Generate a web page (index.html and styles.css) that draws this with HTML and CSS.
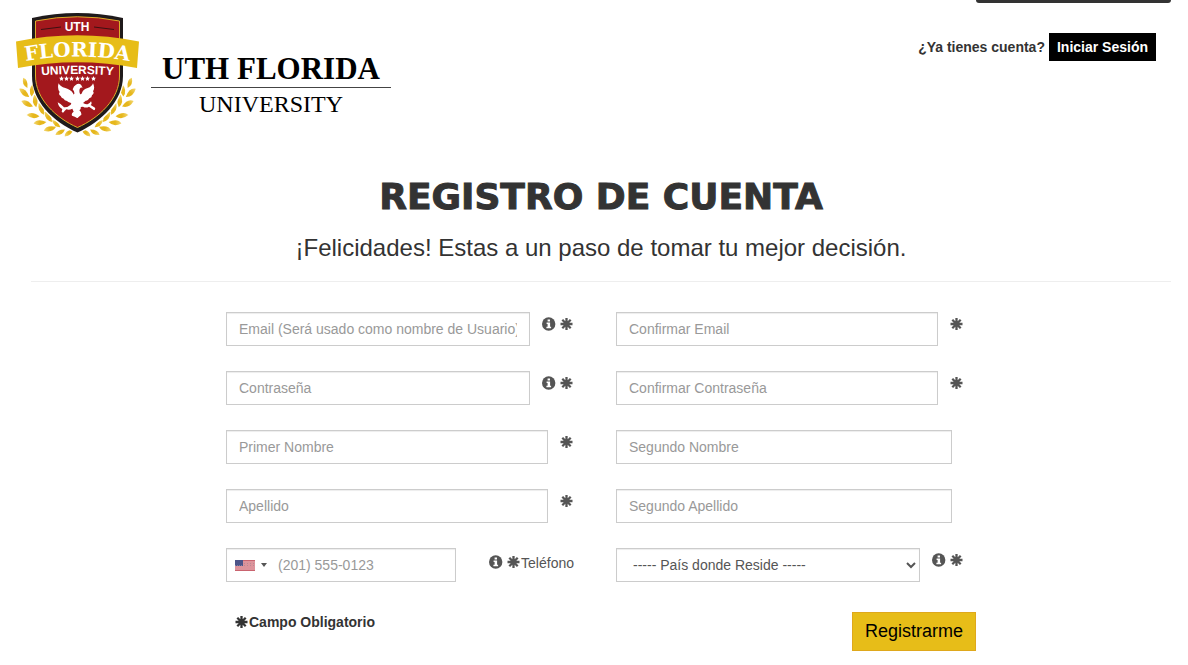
FILE: index.html
```html
<!DOCTYPE html>
<html lang="es">
<head>
<meta charset="utf-8">
<meta name="viewport" content="width=device-width, initial-scale=1">
<title>Registro de cuenta</title>
<link rel="stylesheet" href="styles.css">
</head>
<body>
<svg class="sprite" aria-hidden="true">
  <symbol id="asterisk" viewBox="0 0 14 14">
    <g stroke="currentColor" stroke-width="2.3">
      <path d="M6.500 1v12M.5 7h12M2.300 2.800l8.400 8.400M10.700 2.800l-8.400 8.400"/>
    </g>
  </symbol>
  <symbol id="info" viewBox="0 0 14 14">
    <circle cx="6.700" cy="7" r="6.700" fill="currentColor"/>
    <path fill="#fff" d="M5.600 2.400h2.400v2H5.600zM4.600 5.500h3.500v4.200h1V11.200H4.400V9.700h1.200V7h-1z"/>
  </symbol>
  <symbol id="leaf" viewBox="-6 -4 12 8" overflow="visible">
    <path d="M-5.500 0Q-2-4.500 5.500-.5Q1 4-5.500 0z" fill="url(#gold)"/>
  </symbol>
  <symbol id="star" viewBox="0 0 10 10">
    <path fill="#fff" d="M5 0l1.500 3.300 3.500.4-2.600 2.400.7 3.600L5 8 1.900 9.700l.7-3.600L0 3.700l3.500-.4z"/>
  </symbol>
</svg>

<div class="page">
  <div class="tab-strip"><span class="tab"></span></div>
  <header class="header">
    <a class="brand" href="#" aria-label="UTH Florida University">
      <svg class="emblem" viewBox="15 12 126 126" aria-hidden="true">
        <defs>
          <linearGradient id="gold"><stop offset="0" stop-color="#f3d873"/><stop offset=".5" stop-color="#e6b71d"/><stop offset="1" stop-color="#e6b71d"/></linearGradient>
          <path id="arc-name" d="M18 62.500Q77 50.500 137 62.500"/>
          <path id="arc-univ" d="M34 76Q77 72 121 76"/>
          <g id="laurel">
            <g transform="translate(25 83) rotate(70)"><use href="#leaf" x="-6" y="-4" width="12" height="8"/></g>
            <g transform="translate(24 93) rotate(42)"><use href="#leaf" x="-7" y="-5" width="14" height="10"/></g>
            <g transform="translate(27 104) rotate(28)"><use href="#leaf" x="-7" y="-5" width="14" height="10"/></g>
            <g transform="translate(33 116) rotate(8)"><use href="#leaf" x="-7" y="-5" width="14" height="10"/></g>
            <g transform="translate(40 123) rotate(-4)"><use href="#leaf" x="-7" y="-5" width="14" height="10"/></g>
            <g transform="translate(50 129) rotate(-15)"><use href="#leaf" x="-7" y="-5" width="14" height="10"/></g>
            <g transform="translate(60 132) rotate(-28)"><use href="#leaf" x="-6" y="-4" width="12" height="9"/></g>
            <g transform="translate(69 133) rotate(-38)"><use href="#leaf" x="-6" y="-4" width="12" height="8"/></g>
            <g transform="translate(32 90) rotate(98)"><use href="#leaf" x="-7" y="-5" width="14" height="10"/></g>
            <g transform="translate(35 101) rotate(84)"><use href="#leaf" x="-7" y="-5" width="14" height="10"/></g>
            <g transform="translate(41 109) rotate(68)"><use href="#leaf" x="-7" y="-5" width="14" height="10"/></g>
            <g transform="translate(48 117) rotate(55)"><use href="#leaf" x="-7" y="-5" width="14" height="10"/></g>
            <g transform="translate(56 124) rotate(42)"><use href="#leaf" x="-6" y="-4" width="12" height="8"/></g>
          </g>
        </defs>
        <use href="#laurel"/>
        <use href="#laurel" transform="translate(155 0) scale(-1 1)"/>
        <path fill="#fff" d="M32 70V78C32 103 52 123 77.500 134C103 123 123.500 103 123.500 78V70z"/>
        <path fill="#1f1a1b" d="M32 18Q77 8 123 18V76C123 101 101 122 77.500 132.500C53 122 32 101 32 76z"/>
        <path fill="#a3181d" stroke="#dcae2b" d="M35.500 21Q77 12.500 119.500 21V76C119.500 99 99 118 77.500 127.500C56 118 35.500 99 35.500 76z"/>
        <path stroke="#3c1012" d="M41 29.500L61 27M94 27L114 29.500"/>
        <path fill="#e7bd18" d="M16 41.500Q77 29 139 41.500L137 68Q77 56.500 18 68z"/>
        <text class="emblem-uth" x="77" y="31" text-anchor="middle">UTH</text>
        <text class="emblem-name" text-anchor="middle"><textPath href="#arc-name" startOffset="50%">FLORIDA</textPath></text>
        <text class="emblem-univ" text-anchor="middle"><textPath href="#arc-univ" startOffset="50%">UNIVERSITY</textPath></text>
        <use href="#star" x="59" y="76" width="5" height="5"/>
        <use href="#star" x="64" y="76" width="5" height="5"/>
        <use href="#star" x="69" y="76" width="5" height="5"/>
        <use href="#star" x="75" y="76" width="5" height="5"/>
        <use href="#star" x="80" y="76" width="5" height="5"/>
        <use href="#star" x="85" y="76" width="5" height="5"/>
        <use href="#star" x="91" y="76" width="5" height="5"/>
        <svg x="57" y="82" width="41" height="36" viewBox="171 246 123 108">
          <path fill="#fff" d="M176 250Q180 260 196 264Q213 269 219 280Q221 286 223 281Q224 275 218 268Q221 258 228 254Q236 249 243 254L248 263Q241 262 239 267Q237 275 240 281Q243 286 246 278Q250 268 263 264Q276 260 279 250Q286 263 279 274Q284 279 276 286Q276 293 268 295Q264 303 257 302Q251 308 249 309Q259 314 264 312Q271 309 273 304Q277 311 272 315L285 323Q287 329 282 331L267 320Q258 325 249 320L242 321Q244 328 238 331Q245 337 244 344Q236 350 232 355Q226 349 216 347Q213 340 221 335L217 326Q208 331 199 328L193 334Q190 341 185 335L187 327Q176 322 173 307Q184 312 192 322Q202 323 212 314Q216 308 211 308Q204 307 201 303Q193 302 191 296Q184 294 182 288Q174 284 179 276Q171 265 176 250z"/>
        </svg>
      </svg>
      <span class="wordmark">
        <span class="wordmark-name">UTH FLORIDA</span>
        <span class="wordmark-sub">UNIVERSITY</span>
      </span>
    </a>
    <div class="login">
      <span>¿Ya tienes cuenta?</span>
      <a class="login-link" href="#">Iniciar Sesión</a>
    </div>
  </header>

  <main>
    <div class="intro">
      <h1>REGISTRO DE CUENTA</h1>
      <p>¡Felicidades! Estas a un paso de tomar tu mejor decisión.</p>
    </div>
    <form class="form">
      <div class="field">
        <input class="control" type="email" aria-label="Email" placeholder="Email (Será usado como nombre de Usuario)">
        <span class="marks"><svg><use href="#info"/></svg><svg><use href="#asterisk"/></svg></span>
      </div>
      <div class="field">
        <input class="control" type="email" aria-label="Confirmar Email" placeholder="Confirmar Email">
        <span class="marks"><svg><use href="#asterisk"/></svg></span>
      </div>
      <div class="field">
        <input class="control" type="password" aria-label="Contraseña" placeholder="Contraseña">
        <span class="marks"><svg><use href="#info"/></svg><svg><use href="#asterisk"/></svg></span>
      </div>
      <div class="field">
        <input class="control" type="password" aria-label="Confirmar Contraseña" placeholder="Confirmar Contraseña">
        <span class="marks"><svg><use href="#asterisk"/></svg></span>
      </div>
      <div class="field">
        <input class="control" type="text" aria-label="Primer Nombre" placeholder="Primer Nombre">
        <span class="marks"><svg><use href="#asterisk"/></svg></span>
      </div>
      <div class="field">
        <input class="control" type="text" aria-label="Segundo Nombre" placeholder="Segundo Nombre">
        <span class="marks"></span>
      </div>
      <div class="field">
        <input class="control" type="text" aria-label="Apellido" placeholder="Apellido">
        <span class="marks"><svg><use href="#asterisk"/></svg></span>
      </div>
      <div class="field">
        <input class="control" type="text" aria-label="Segundo Apellido" placeholder="Segundo Apellido">
        <span class="marks"></span>
      </div>
      <div class="field">
        <div class="control phone">
          <button class="country" type="button" aria-label="Estados Unidos">
            <svg class="flag" viewBox="0 0 20 11" aria-hidden="true">
              <path fill="#dd939b" d="M0 0h20v11H0z"/>
              <path stroke="#c9636f" d="M8 .5h12M0 10.500h20"/>
              <path stroke="#b98a93" stroke-dasharray="1 2" d="M9 3.500h11M9 5.500h11"/>
              <path fill="#4d5488" d="M0 0h8v6H0z"/>
              <path stroke="#7d83a8" stroke-dasharray="1 1" d="M0 5.500h8"/>
            </svg>
            <span class="caret"></span>
          </button>
          <input id="phone" type="tel" placeholder="(201) 555-0123">
        </div>
        <span class="marks marks-phone"><svg><use href="#info"/></svg><svg><use href="#asterisk"/></svg><label for="phone">Teléfono</label></span>
      </div>
      <div class="field">
        <select class="control" aria-label="País donde Reside"><option>----- País donde Reside -----</option></select>
        <span class="marks"><svg><use href="#info"/></svg><svg><use href="#asterisk"/></svg></span>
      </div>
      <div class="form-footer">
        <span class="required"><svg><use href="#asterisk"/></svg>Campo Obligatorio</span>
        <button class="submit" type="submit">Registrarme</button>
      </div>
    </form>
  </main>
</div>
</body>
</html>
```
FILE: styles.css
```css
* { box-sizing: border-box; }

body {
  margin: 0;
  background: #fff;
  color: #333;
  font: 14px/20px "Liberation Sans", Arial, sans-serif;
}

input, select, button { font: inherit; }

.sprite {
  position: absolute;
  width: 0;
  height: 0;
}

.page { padding-right: 17px; }

.tab-strip {
  display: flex;
  justify-content: flex-end;
}

.tab {
  width: 195px;
  height: 3px;
  border-radius: 0 0 4px 4px;
  background: #333;
}

.header {
  display: flex;
  justify-content: space-between;
  align-items: flex-start;
  padding: 9px 15px 0;
}

.brand {
  display: flex;
  align-items: flex-start;
  gap: 10px;
  color: #000;
  text-decoration: none;
}

.emblem {
  width: 126px;
  height: 126px;
}

.emblem text { fill: #fff; }
.emblem-uth { font: bold 12px "Liberation Sans", sans-serif; }
.emblem-name { font: bold 20px "DejaVu Serif", serif; }
.emblem-univ { font: bold 12px "Liberation Sans", sans-serif; }

.wordmark {
  display: flex;
  flex-direction: column;
  width: 240px;
  padding-top: 39px;
  font-family: "Liberation Serif", "Times New Roman", serif;
  text-align: center;
}

.wordmark-name {
  border-bottom: 1px solid #444;
  font-size: 31px;
  font-weight: bold;
  line-height: 36px;
}

.wordmark-sub {
  font-size: 24px;
  line-height: 32px;
}

.login {
  display: flex;
  align-items: center;
  gap: 4px;
  padding-top: 21px;
  font-weight: bold;
}

.login-link {
  padding: 4px 8px;
  background: #000;
  color: #fff;
  text-decoration: none;
}

main { padding-left: 31px; }

.intro {
  padding: 37px 0 19px;
  border-bottom: 1px solid #eee;
  text-align: center;
}

h1 {
  margin: 0;
  font: bold 36px/44px "DejaVu Sans", sans-serif;
  -webkit-text-stroke: 1px #333;
}

.intro p {
  margin: 15px 0 0;
  font-size: 24px;
  line-height: 28px;
}

.form {
  display: grid;
  grid-template-columns: repeat(2, minmax(0, 1fr));
  gap: 25px 30px;
  max-width: 750px;
  margin: 30px auto 14px;
}

.field {
  display: flex;
  align-items: flex-start;
  color: #555;
}

.control {
  flex: 1;
  min-width: 0;
  height: 34px;
  padding: 6px 12px;
  border: 1px solid #ccc;
  border-radius: 0;
  background: #fff;
  box-shadow: inset 0 1px 1px rgba(0, 0, 0, .075);
  color: #555;
}

input::placeholder {
  color: #999;
  opacity: 1;
}

.marks {
  display: flex;
  gap: 4px;
  padding: 5px 12px 0;
}

.marks svg,
.required svg {
  width: 14px;
  height: 14px;
}

.marks-phone {
  padding: 7px 12px 0 33px;
}

.marks-phone label {
  margin: -2px 0 0 -4px;
}

.phone {
  display: flex;
  align-items: center;
  gap: 11px;
  padding: 0 12px 0 8px;
}

.phone input {
  flex: 1;
  min-width: 0;
  padding: 0;
  border: 0;
  background: none;
}

.country {
  display: flex;
  align-items: center;
  gap: 6px;
  padding: 0;
  border: 0;
  background: none;
}

.flag {
  width: 20px;
  height: 11px;
}

.caret {
  border: 3px solid transparent;
  border-top: 4px solid #555;
  border-bottom: 0;
}

.form-footer {
  display: flex;
  grid-column: 1 / -1;
  justify-content: space-between;
  align-items: flex-start;
  padding-top: 5px;
}

.required {
  display: flex;
  align-items: center;
  padding-left: 9px;
  font-weight: bold;
}

.submit {
  padding: 6px 12px;
  border: 1px solid #dfa81c;
  background: #e7bd18;
  color: #000;
  font-size: 18px;
  line-height: 25px;
}
```
